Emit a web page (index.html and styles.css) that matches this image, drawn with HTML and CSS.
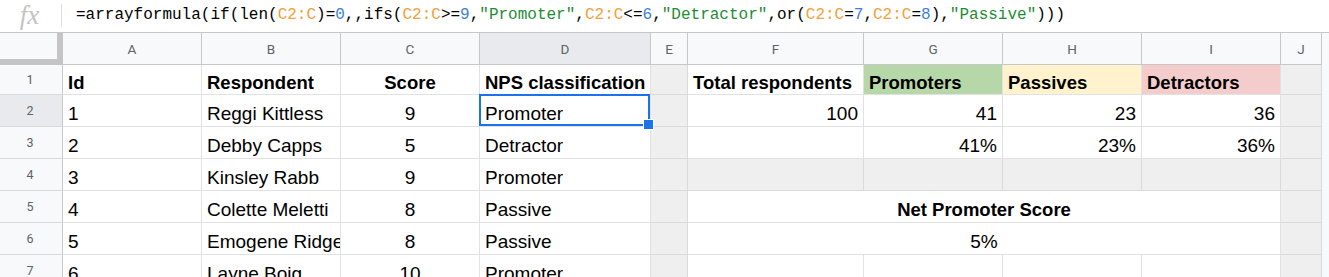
FILE: index.html
```html
<!DOCTYPE html>
<html>
	<head>
		<meta charset="utf-8">
		<title>NPS</title>
		<link rel="stylesheet" href="styles.css">
	</head>
	<body>
		<div class="formula-bar">
			<span class="fx">fx</span>
			<span class="formula">=arrayformula(if(len(<i class="rng">C2:C</i>)=<i class="num">0</i>,,ifs(<i class="rng">C2:C</i>&gt;=<i class="num">9</i>,<i class="str">"Promoter"</i>,<i class="rng">C2:C</i>&lt;=<i class="num">6</i>,<i class="str">"Detractor"</i>,or(<i class="rng">C2:C</i>=<i class="num">7</i>,<i class="rng">C2:C</i>=<i class="num">8</i>),<i class="str">"Passive"</i>)))</span>
		</div>
		<div class="sheet">
			<!-- column headers -->
			<div class="corner"></div>
			<div class="ch">A</div>
			<div class="ch">B</div>
			<div class="ch">C</div>
			<div class="ch ch-on">D</div>
			<div class="ch">E</div>
			<div class="ch">F</div>
			<div class="ch">G</div>
			<div class="ch">H</div>
			<div class="ch">I</div>
			<div class="ch">J</div>
			<div class="gutter"></div>

			<!-- row 1 -->
			<div class="rh">1</div>
			<div class="c b">Id</div>
			<div class="c b">Respondent</div>
			<div class="c b m">Score</div>
			<div class="c b">NPS classification</div>
			<div class="c g"></div>
			<div class="c b">Total respondents</div>
			<div class="c b green">Promoters</div>
			<div class="c b yellow">Passives</div>
			<div class="c b red">Detractors</div>
			<div class="c g"></div>
			<div class="gutter"></div>

			<!-- row 2 -->
			<div class="rh rh-on">2</div>
			<div class="c">1</div>
			<div class="c">Reggi Kittless</div>
			<div class="c m">9</div>
			<div class="c sel">Promoter</div>
			<div class="c g"></div>
			<div class="c r">100</div>
			<div class="c r">41</div>
			<div class="c r">23</div>
			<div class="c r">36</div>
			<div class="c g"></div>
			<div class="gutter"></div>

			<!-- row 3 -->
			<div class="rh">3</div>
			<div class="c">2</div>
			<div class="c">Debby Capps</div>
			<div class="c m">5</div>
			<div class="c">Detractor</div>
			<div class="c g"></div>
			<div class="c"></div>
			<div class="c r">41%</div>
			<div class="c r">23%</div>
			<div class="c r">36%</div>
			<div class="c g"></div>
			<div class="gutter"></div>

			<!-- row 4 -->
			<div class="rh">4</div>
			<div class="c">3</div>
			<div class="c">Kinsley Rabb</div>
			<div class="c m">9</div>
			<div class="c">Promoter</div>
			<div class="c g"></div>
			<div class="c g"></div>
			<div class="c g"></div>
			<div class="c g"></div>
			<div class="c g"></div>
			<div class="c g"></div>
			<div class="gutter"></div>

			<!-- row 5 -->
			<div class="rh">5</div>
			<div class="c">4</div>
			<div class="c">Colette Meletti</div>
			<div class="c m">8</div>
			<div class="c">Passive</div>
			<div class="c g"></div>
			<div class="c b m span4">Net Promoter Score</div>
			<div class="c g"></div>
			<div class="gutter"></div>

			<!-- row 6 -->
			<div class="rh">6</div>
			<div class="c">5</div>
			<div class="c">Emogene Ridgeway</div>
			<div class="c m">8</div>
			<div class="c">Passive</div>
			<div class="c g"></div>
			<div class="c m span4">5%</div>
			<div class="c g"></div>
			<div class="gutter"></div>

			<!-- row 7 -->
			<div class="rh">7</div>
			<div class="c">6</div>
			<div class="c">Layne Boig</div>
			<div class="c m">10</div>
			<div class="c">Promoter</div>
			<div class="c g"></div>
			<div class="c"></div>
			<div class="c"></div>
			<div class="c"></div>
			<div class="c"></div>
			<div class="c g"></div>
			<div class="gutter"></div>
		</div>
	</body>
</html>
```

FILE: styles.css
```css
*{
	box-sizing: border-box;
}
body{
	margin: 0;
	overflow: hidden;
	background: #fff;
	font-family: "Liberation Sans", Arial, sans-serif;
}
.formula-bar{
	display: flex;
	align-items: center;
	height: 33px;
	padding-bottom: 2px;
	border-bottom: 1px solid #c7c7c7;
}
.fx{
	display: flex;
	align-items: center;
	justify-content: center;
	width: 62px;
	height: 23px;
	margin-top: 1px;
	padding-right: 2px;
	border-right: 1px solid #dadce0;
	font-family: "Liberation Serif", serif;
	font-style: italic;
	font-size: 27px;
	line-height: 23px;
	color: #c4c4c4;
}
.formula{
	padding-left: 14px;
	font-family: "Liberation Mono", monospace;
	font-size: 16px;
	color: #000;
	white-space: nowrap;
}
.formula i{
	font-style: normal;
}
.rng{
	color: #f5a03a;
}
.num{
	color: #3d7fdc;
}
.str{
	color: #1e8c34;
}
.sheet{
	display: grid;
	grid-template-columns: 63px 139px 139px 139px 171px 37px 176px 139px 139px 139px 41px 1fr;
	grid-template-rows: 32px 30px;
	grid-auto-rows: 32px;
}
.corner{
	background: #f8f9fa;
	border-right: 6px solid #c4c4c4;
	border-bottom: 6px solid #c4c4c4;
}
.ch{
	display: flex;
	align-items: center;
	justify-content: center;
	background: #f8f9fa;
	border-right: 1px solid #c7c7c7;
	border-bottom: 1px solid #c7c7c7;
	font-family: Roboto, sans-serif;
	font-size: 13.5px;
	color: #5f6368;
}
.ch-on{
	background: #e8eaed;
}
.gutter{
	background: #f8f9fa;
}
.rh{
	display: flex;
	align-items: center;
	justify-content: center;
	padding-right: 2px;
	background: #f8f9fa;
	border-right: 1px solid #c7c7c7;
	border-bottom: 1px solid #dadada;
	font-family: Roboto, sans-serif;
	font-size: 12.5px;
	color: #5f6368;
}
.rh-on{
	background: #e8eaed;
}
.c{
	display: flex;
	align-items: center;
	padding: 6px 5px 0;
	border-right: 1px solid #e2e2e2;
	border-bottom: 1px solid #e2e2e2;
	font-size: 19px;
	color: #000;
	white-space: nowrap;
	overflow: hidden;
}
.b{
	font-weight: bold;
	font-size: 18.5px;
}
.m{
	justify-content: center;
}
.r{
	justify-content: flex-end;
}
.g{
	background: #efefef;
	border-color: #dadada;
}
.green{
	background: #b6d7a8;
}
.yellow{
	background: #fff2cc;
}
.red{
	background: #f4cccc;
}
.span4{
	grid-column: span 4;
}
.sel{
	position: relative;
	overflow: visible;
}
.sel:after{
	content: '';
	position: absolute;
	top: -1px;
	left: -1px;
	right: 0;
	bottom: 0;
	border: 2px solid #1a73e8;
	z-index: 1;
}
.sel:before{
	content: '';
	position: absolute;
	right: -4px;
	bottom: -4px;
	width: 9px;
	height: 9px;
	background: #1a73e8;
	border: 1px solid #fff;
	z-index: 2;
}
```
